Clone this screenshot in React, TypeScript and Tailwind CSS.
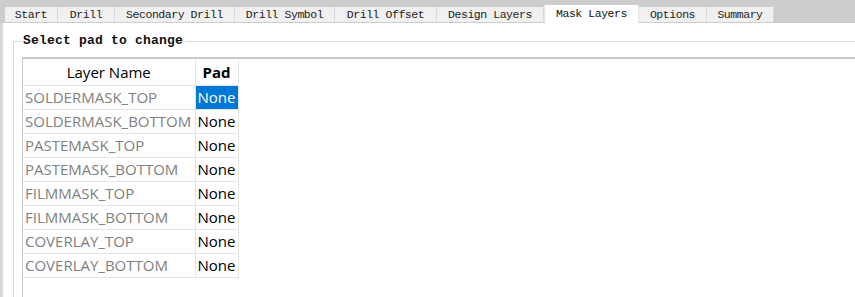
import React from "react";

const tabs = [
  { label: "Start", w: 53 },
  { label: "Drill", w: 57 },
  { label: "Secondary Drill", w: 120 },
  { label: "Drill Symbol", w: 100 },
  { label: "Drill Offset", w: 102 },
  { label: "Design Layers", w: 107 },
  { label: "Mask Layers", w: 95, active: true },
  { label: "Options", w: 68 },
  { label: "Summary", w: 67 },
];

const layers = [
  "SOLDERMASK_TOP",
  "SOLDERMASK_BOTTOM",
  "PASTEMASK_TOP",
  "PASTEMASK_BOTTOM",
  "FILMMASK_TOP",
  "FILMMASK_BOTTOM",
  "COVERLAY_TOP",
  "COVERLAY_BOTTOM",
];

const mono = { fontFamily: '"Liberation Mono", "Noto Sans CJK SC", monospace' };

export default function App() {
  return (
    <div className="w-[855px] h-[297px] bg-white overflow-hidden flex flex-col">
      {/* ===== TAB BAR ===== */}
      <div className="h-[23px] bg-[#cdcdcd] flex items-end pl-[5px] shrink-0">
        {tabs.map((t) =>
          t.active ? (
            <div
              key={t.label}
              style={{ ...mono, width: t.w }}
              className="h-[18px] bg-white text-[11.5px] tracking-[-0.45px] text-[#111] flex items-center justify-center border-x border-[#e6e6e6]"
            >
              {t.label}
            </div>
          ) : (
            <div
              key={t.label}
              style={{ ...mono, width: t.w }}
              className="h-[15px] mb-[1px] bg-[#f0f0f0] text-[11.5px] tracking-[-0.45px] text-[#222] flex items-center justify-center border-r border-[#dadada]"
            >
              {t.label}
            </div>
          )
        )}
      </div>

      {/* ===== PAGE ===== */}
      <div className="flex-1 flex">
        <div className="w-[3px] bg-[#d9d9d9]"></div>
        <fieldset className="flex-1 ml-[10px] mt-[10px] border-t border-l border-[#dcdcdc] pl-[7px] pr-0 pb-0 min-w-0">
          <legend
            style={mono}
            className="px-[2px] text-[13px] leading-[16px] font-bold tracking-[0.2px] text-[#111]"
          >
            Select pad to change
          </legend>

          {/* table widget */}
          <div className="ml-[1px] mt-[8px] h-[300px] border-t-2 border-l border-[#c8c8ce] pt-[1px]">
            <table
              className="border-collapse text-[15px]"
              style={{ fontFamily: '"Open Sans", "Noto Sans", sans-serif' }}
            >
              <thead>
                <tr className="h-[25px]">
                  <th className="w-[172px] font-normal text-black border border-[#e4e4e4] border-t-0 border-l-0 p-0 text-center">
                    Layer Name
                  </th>
                  <th className="w-[43px] font-bold text-black border border-[#e4e4e4] border-t-0 p-0 text-center">
                    Pad
                  </th>
                </tr>
              </thead>
              <tbody>
                {layers.map((l, i) => (
                  <tr key={l} className="h-[24px]">
                    <td className="border border-[#e4e4e4] border-l-0 pl-[2px] pr-0 py-0 text-[#808080] whitespace-nowrap leading-none">
                      {l}
                    </td>
                    <td className="border border-[#e4e4e4] p-0 leading-none">
                      <div
                        className={
                          i === 0
                            ? "h-[23px] flex items-center pl-[2px] bg-[#0078d7] text-white"
                            : "h-[23px] flex items-center pl-[2px] text-black"
                        }
                      >
                        None
                      </div>
                    </td>
                  </tr>
                ))}
              </tbody>
            </table>
          </div>
        </fieldset>
      </div>
    </div>
  );
}
